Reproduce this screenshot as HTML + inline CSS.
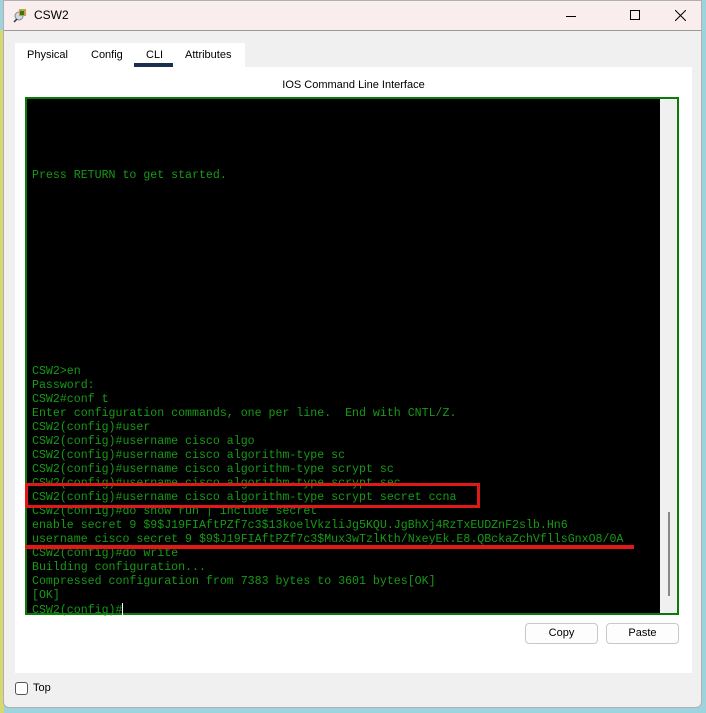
<!DOCTYPE html>
<html><head><meta charset="utf-8"><style>
*{margin:0;padding:0;box-sizing:border-box}
body{width:706px;height:713px;overflow:hidden;background:#9cd3dc;position:relative;font-family:"Liberation Sans",sans-serif}
.lstrip{position:absolute;left:0;top:30px;width:4px;height:683px;background:#d8d870}
.win{position:absolute;left:3px;top:0;width:699px;height:708px;background:#f0f0f0;border:1px solid #b0b0b0;border-radius:0 0 6px 6px}
.title{position:absolute;left:0;top:0;width:100%;height:30px;background:#f9eded;border-bottom:1px solid #999}
.title .t{position:absolute;left:30px;top:7px;font-size:12px;color:#000}
.tabs{position:absolute;left:11px;top:42px;width:230px;height:24px;background:#fff}
.tab{position:absolute;top:6px;font-size:11px;color:#000}
.ul{position:absolute;left:119px;top:20px;width:39px;height:4px;background:#1a2f50}
.panel{position:absolute;left:11px;top:66px;width:677px;height:606px;background:#fff}
.hdr{position:absolute;left:0;top:12px;width:100%;text-align:center;font-size:11px}
.term{position:absolute;left:22px;top:97px;width:654px;height:518px;background:#000;border:2px solid #0a7a0a}
.sb{position:absolute;right:0;top:0;width:17px;height:100%;background:#f0f0f0}
.thumb{position:absolute;left:8px;top:413px;width:2px;height:84px;background:#888}
pre{position:absolute;left:5px;font-family:"Liberation Mono",monospace;font-size:11.6px;line-height:14px;color:#179a17}
.cur{display:inline-block;width:1px;height:12px;background:#fff;vertical-align:-2px}
.box{position:absolute;left:25px;top:483px;width:455px;height:25px;border:3px solid #e01818}
.line{position:absolute;left:25px;top:545px;width:609px;height:4px;background:#e01818}
.btn{position:absolute;top:623px;width:73px;height:21px;border:1px solid #c8c8c8;border-radius:4px;background:#fdfdfd;font-size:11px;text-align:center;line-height:19px}
.chk{position:absolute;left:11px;top:681px;width:13px;height:13px;border:1px solid #555;border-radius:3px;background:#fff}
</style></head><body>
<div class="lstrip"></div>
<div class="win">
<div class="title">
<svg style="position:absolute;left:9px;top:6px" width="16" height="16" viewBox="0 0 16 16"><circle cx="6" cy="9" r="4" fill="#cfd8e0" stroke="#7a8a9a"/><rect x="6" y="2" width="7" height="7" fill="#c8a040"/><rect x="7" y="4" width="4" height="4" fill="#2a7a2a"/><path d="M4 12l-3 3" stroke="#333" stroke-width="1.5"/></svg>
<span class="t">CSW2</span>
<div style="position:absolute;left:562px;top:15px;width:10px;height:1px;background:#000"></div>
<div style="position:absolute;left:626px;top:9px;width:10px;height:10px;border:1px solid #000"></div>
<svg style="position:absolute;left:671px;top:9px" width="11" height="11"><path d="M0 0L11 11M11 0L0 11" stroke="#000" stroke-width="1"/></svg>
</div>
<div class="tabs">
<span class="tab" style="left:12px">Physical</span>
<span class="tab" style="left:76px">Config</span>
<span class="tab" style="left:131px">CLI</span>
<span class="tab" style="left:170px">Attributes</span>
<div class="ul"></div>
</div>
<div class="panel"><div class="hdr">IOS Command Line Interface</div></div>
<div class="chk"></div>
<span style="position:absolute;left:29px;top:681px;font-size:11px">Top</span>
</div>
<div class="term" style="left:25px">
<div class="sb"><div class="thumb"></div></div>
<pre style="top:70px">Press RETURN to get started.</pre>
<pre style="top:266px">CSW2&gt;en
Password:
CSW2#conf t
Enter configuration commands, one per line.  End with CNTL/Z.
CSW2(config)#user
CSW2(config)#username cisco algo
CSW2(config)#username cisco algorithm-type sc
CSW2(config)#username cisco algorithm-type scrypt sc
CSW2(config)#username cisco algorithm-type scrypt sec
CSW2(config)#username cisco algorithm-type scrypt secret ccna
CSW2(config)#do show run | include secret
enable secret 9 $9$J19FIAftPZf7c3$13koelVkzliJg5KQU.JgBhXj4RzTxEUDZnF2slb.Hn6
username cisco secret 9 $9$J19FIAftPZf7c3$Mux3wTzlKth/NxeyEk.E8.QBckaZchVfllsGnxO8/0A
CSW2(config)#do write
Building configuration...
Compressed configuration from 7383 bytes to 3601 bytes[OK]
[OK]
CSW2(config)#<span class="cur"></span></pre>
</div>
<div class="box"></div>
<div class="line"></div>
<div class="btn" style="left:525px">Copy</div>
<div class="btn" style="left:606px">Paste</div>
</body></html>
